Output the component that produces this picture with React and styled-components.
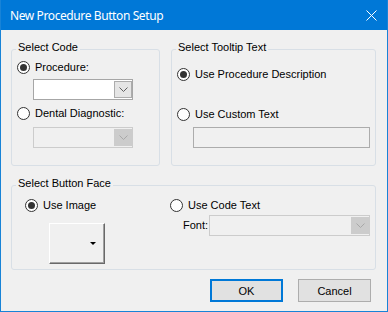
import React from "react";
import styled, { createGlobalStyle } from "styled-components";

const GlobalStyle = createGlobalStyle`
  html, body { margin: 0; padding: 0; background: #ffffff; }
  body { font-family: "Liberation Sans", Arial, sans-serif; font-size: 11px; color: #000; }
  *, *::before, *::after { box-sizing: border-box; }
`;

const Window = styled.div`
  width: 388px;
  height: 312px;
  background: #f0f0f0;
  border: 1px solid #1883d7;
  border-top: none;
  display: flex;
  flex-direction: column;
`;

const TitleBar = styled.div`
  height: 30px;
  flex: none;
  background: #0078d7;
  color: #ffffff;
  display: flex;
  align-items: center;
  justify-content: space-between;
  padding: 0 9px 0 9px;
  font-family: "Noto Sans", "Open Sans", sans-serif;
  font-size: 12px;
  letter-spacing: -0.4px;
`;

const TitleText = styled.span`
  white-space: nowrap;
`;

const CloseIcon = styled.svg`
  display: block;
  width: 11px;
  height: 11px;
  margin-right: 1px;
`;

const Body = styled.div`
  flex: 1;
  display: flex;
  flex-direction: column;
  padding: 11px 11px 0 10px;
`;

const TopRow = styled.div`
  display: flex;
  gap: 11px;
  height: 125px;
`;

const Group = styled.fieldset`
  margin: 0;
  padding: 0;
  min-width: 0;
  border: 1px solid #d8dfe6;
  border-radius: 3px;
  width: ${(p) => (p.$width ? `${p.$width}px` : "auto")};
  height: ${(p) => (p.$height ? `${p.$height}px` : "auto")};
  margin-top: ${(p) => p.$mt || 0}px;
`;

const Legend = styled.legend`
  margin-left: 4px;
  padding: 0 2px 4px;
  line-height: 12px;
  font-size: 11px;
  color: #000;
`;

const GroupBody = styled.div`
  display: flex;
  flex-direction: column;
  align-items: flex-start;
  padding: ${(p) => p.$pt}px 0 0 ${(p) => p.$pl}px;
`;

const RadioRow = styled.label`
  display: flex;
  align-items: center;
  height: 13px;
  line-height: 13px;
  gap: 5px;
  white-space: nowrap;
  margin-top: ${(p) => p.$mt || 0}px;
`;

const RadioCircle = styled.span`
  width: 13px;
  height: 13px;
  flex: none;
  border-radius: 50%;
  border: 1px solid #333333;
  background: #ffffff;
  display: flex;
  align-items: center;
  justify-content: center;
  &::after {
    content: "";
    width: 7px;
    height: 7px;
    border-radius: 50%;
    background: ${(p) => (p.$checked ? "#333333" : "transparent")};
  }
`;

const Indented = styled.div`
  margin-top: ${(p) => p.$mt || 0}px;
  margin-left: ${(p) => p.$ml || 0}px;
`;

const ComboBox = styled.div`
  width: ${(p) => p.$width}px;
  height: 21px;
  display: flex;
  border: 1px solid ${(p) => (p.$disabled ? "#cccccc" : "#a6a6a6")};
  background: ${(p) => (p.$disabled ? "#f0f0f0" : "#ffffff")};
`;

const ComboField = styled.div`
  flex: 1;
`;

const ComboButton = styled.div`
  width: 18px;
  margin: 1px 0;
  border: 1px solid ${(p) => (p.$disabled ? "#cccccc" : "#acacac")};
  background: ${(p) => (p.$disabled ? "#cccccc" : "#e5e5e5")};
  display: flex;
  align-items: center;
  justify-content: center;
`;

const Chevron = ({ color }) => (
  <svg width="9" height="5" viewBox="0 0 9 5">
    <path d="M0.5 0.5 L4.5 4.5 L8.5 0.5" fill="none" stroke={color} strokeWidth="1" />
  </svg>
);

const Combo = ({ width, disabled }) => (
  <ComboBox $width={width} $disabled={disabled}>
    <ComboField />
    <ComboButton $disabled={disabled}>
      <Chevron color={disabled ? "#a8a8a8" : "#606060"} />
    </ComboButton>
  </ComboBox>
);

const TextBox = styled.div`
  width: ${(p) => p.$width}px;
  height: 21px;
  border: 1px solid #acacac;
  background: #f0f0f0;
`;

const FaceGrid = styled.div`
  display: grid;
  grid-template-columns: 145px 1fr;
  padding: 6px 0 0 13px;
`;

const Column = styled.div`
  display: flex;
  flex-direction: column;
  align-items: flex-start;
`;

const ImageButton = styled.div`
  width: 56px;
  height: 41px;
  margin: 11px 0 0 24px;
  background: #f0f0f0;
  border: 1px solid;
  border-color: #ffffff #696969 #696969 #ffffff;
  box-shadow: inset -1px -1px 0 #a0a0a0;
  display: flex;
  align-items: center;
  justify-content: flex-end;
  padding: 0 8px 1px 0;
`;

const DropTriangle = styled.span`
  width: 0;
  height: 0;
  border-left: 3px solid transparent;
  border-right: 3px solid transparent;
  border-top: 3px solid #000;
`;

const FontRow = styled.div`
  display: flex;
  align-items: center;
  margin: 3px 0 0 13px;
`;

const FontLabel = styled.span`
  width: 26px;
  line-height: 13px;
`;

const Footer = styled.div`
  display: flex;
  justify-content: flex-end;
  gap: 15px;
  margin-top: 9px;
  padding-right: 5px;
`;

const DialogButton = styled.button`
  width: 73px;
  height: 23px;
  padding: 0;
  margin: 0;
  font-family: "Liberation Sans", Arial, sans-serif;
  font-size: 11px;
  color: #000;
  background: #e1e1e1;
  border: ${(p) => (p.$default ? "2px solid #0078d7" : "1px solid #adadad")};
`;

export default function App() {
  return (
    <>
      <GlobalStyle />
      <Window>
        <TitleBar>
          <TitleText>New Procedure Button Setup</TitleText>
          <CloseIcon viewBox="0 0 11 11">
            <path d="M0.5 0.5 L10.5 10.5 M10.5 0.5 L0.5 10.5" stroke="#ffffff" strokeWidth="1" fill="none" />
          </CloseIcon>
        </TitleBar>
        <Body>
          <TopRow>
            <Group $width={149}>
              <Legend>Select Code</Legend>
              <GroupBody $pt={4} $pl={5}>
                <RadioRow>
                  <RadioCircle $checked />
                  Procedure:
                </RadioRow>
                <Indented $mt={5} $ml={16}>
                  <Combo width={100} />
                </Indented>
                <RadioRow $mt={7}>
                  <RadioCircle />
                  Dental Diagnostic:
                </RadioRow>
                <Indented $mt={7} $ml={16}>
                  <Combo width={100} disabled />
                </Indented>
              </GroupBody>
            </Group>
            <Group $width={205}>
              <Legend>Select Tooltip Text</Legend>
              <GroupBody $pt={11} $pl={5}>
                <RadioRow>
                  <RadioCircle $checked />
                  Use Procedure Description
                </RadioRow>
                <RadioRow $mt={27}>
                  <RadioCircle />
                  Use Custom Text
                </RadioRow>
                <Indented $mt={6} $ml={16}>
                  <TextBox $width={177} />
                </Indented>
              </GroupBody>
            </Group>
          </TopRow>
          <Group $height={93} $mt={11}>
            <Legend>Select Button Face</Legend>
            <FaceGrid>
              <Column>
                <RadioRow>
                  <RadioCircle $checked />
                  Use Image
                </RadioRow>
                <ImageButton>
                  <DropTriangle />
                </ImageButton>
              </Column>
              <Column>
                <RadioRow>
                  <RadioCircle />
                  Use Code Text
                </RadioRow>
                <FontRow>
                  <FontLabel>Font:</FontLabel>
                  <Combo width={161} disabled />
                </FontRow>
              </Column>
            </FaceGrid>
          </Group>
          <Footer>
            <DialogButton $default>OK</DialogButton>
            <DialogButton>Cancel</DialogButton>
          </Footer>
        </Body>
      </Window>
    </>
  );
}
